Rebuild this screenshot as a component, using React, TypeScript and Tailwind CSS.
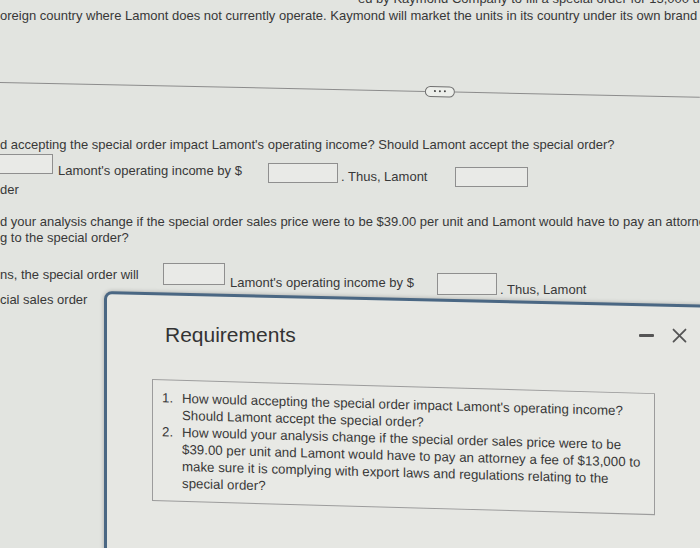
import React from "react";

function Box({ className }: { className: string }) {
  return <div className={"shrink-0 border border-[#8f8f8f] bg-[#e9eae7] " + className} />;
}

export default function App() {
  return (
    <div className="relative w-[700px] h-[548px] overflow-hidden bg-[#e2e4e0] font-['Liberation_Sans',Arial,sans-serif] text-[13px] text-[#383838]">
      <div className="flex flex-col whitespace-nowrap">
        <div className="-mt-[10px] leading-[17px]">
          <div className="pl-[358px]">ed by Kaymond Company to fill a special order for 13,000 units</div>
          <div>oreign country where Lamont does not currently operate. Kaymond will market the units in its country under its own brand name.</div>
        </div>

        <div className="mt-[52px] h-[12px] flex items-center origin-left rotate-[1.2deg]">
          <div className="w-[425px] h-px bg-[#8c8c8c]" />
          <div className="shrink-0 w-[30px] h-[11px] rounded-full border border-[#6f6f6f] bg-[#eceeea] flex items-center justify-center gap-[3px]">
            <span className="w-[2px] h-[2px] rounded-full bg-[#444]" />
            <span className="w-[2px] h-[2px] rounded-full bg-[#444]" />
            <span className="w-[2px] h-[2px] rounded-full bg-[#444]" />
          </div>
          <div className="flex-1 h-px bg-[#8c8c8c]" />
        </div>

        <div className="mt-[50px] leading-[14px]">
          d accepting the special order impact Lamont's operating income? Should Lamont accept the special order?
        </div>

        <div className="-mt-[2px] h-[32px] flex items-start">
          <Box className="-ml-[5px] w-[58px] h-[20px] mt-[4px]" />
          <div className="shrink-0 ml-[5px] w-[210px] mt-[13px] leading-[15px]">Lamont's operating income by $</div>
          <Box className="w-[70px] h-[20px] mt-[13px]" />
          <div className="shrink-0 w-[117px] pl-[3px] mt-[19px] leading-[15px]">. Thus, Lamont</div>
          <Box className="w-[73px] h-[20px] mt-[17px]" />
        </div>
        <div className="leading-[16px]">der</div>

        <div className="mt-[16px] leading-[16px]">
          <div>d your analysis change if the special order sales price were to be $39.00 per unit and Lamont would have to pay an attorney a fee</div>
          <div>g to the special order?</div>
        </div>

        <div className="mt-[17px] h-[29px] flex items-start">
          <div className="shrink-0 w-[163px] mt-[4px] leading-[15px]">ns, the special order will</div>
          <Box className="w-[62px] h-[22px]" />
          <div className="shrink-0 w-[212px] pl-[5px] mt-[12px] leading-[15px]">Lamont's operating income by $</div>
          <Box className="w-[60px] h-[22px] mt-[10px]" />
          <div className="shrink-0 pl-[3px] mt-[19px] leading-[15px]">. Thus, Lamont</div>
        </div>
        <div className="leading-[16px]">cial sales order</div>
      </div>

      <div className="absolute left-[104px] top-[291px] w-[640px] h-[300px] origin-top-left skew-y-[1.3deg] border-[3px] border-[#4a6783] rounded-tl-[8px] bg-[#e6e7e3] shadow-[0_0_4px_rgba(0,0,0,0.25)]">
        <div className="origin-left -skew-y-[1.3deg] flex items-center pt-[28px] pl-[58px] pr-[54px]">
          <div className="text-[21px] leading-[26px] text-[#333]">Requirements</div>
          <div className="ml-auto w-[15px] h-[3px] rounded-[1px] bg-[#555]" />
          <svg className="ml-[18px]" width="15" height="15" viewBox="0 0 15 15">
            <path d="M1.5 1.5 L13.5 13.5 M13.5 1.5 L1.5 13.5" stroke="#555" strokeWidth="1.8" strokeLinecap="round" />
          </svg>
        </div>

        <div className="mt-[30px] ml-[45px] w-[503px] h-[122px] origin-left skew-y-[0.3deg] border border-[#9c9c9c] bg-[#e8e9e5] pt-[9px] pl-[9px] text-[13.3px] leading-[17px] text-[#383838] whitespace-nowrap">
          <div className="grid grid-cols-[20px_1fr]">
            <div>1.</div>
            <div>
              <div>How would accepting the special order impact Lamont's operating income?</div>
              <div>Should Lamont accept the special order?</div>
            </div>
            <div>2.</div>
            <div>
              <div>How would your analysis change if the special order sales price were to be</div>
              <div>$39.00 per unit and Lamont would have to pay an attorney a fee of $13,000 to</div>
              <div>make sure it is complying with export laws and regulations relating to the</div>
              <div>special order?</div>
            </div>
          </div>
        </div>
      </div>
    </div>
  );
}
